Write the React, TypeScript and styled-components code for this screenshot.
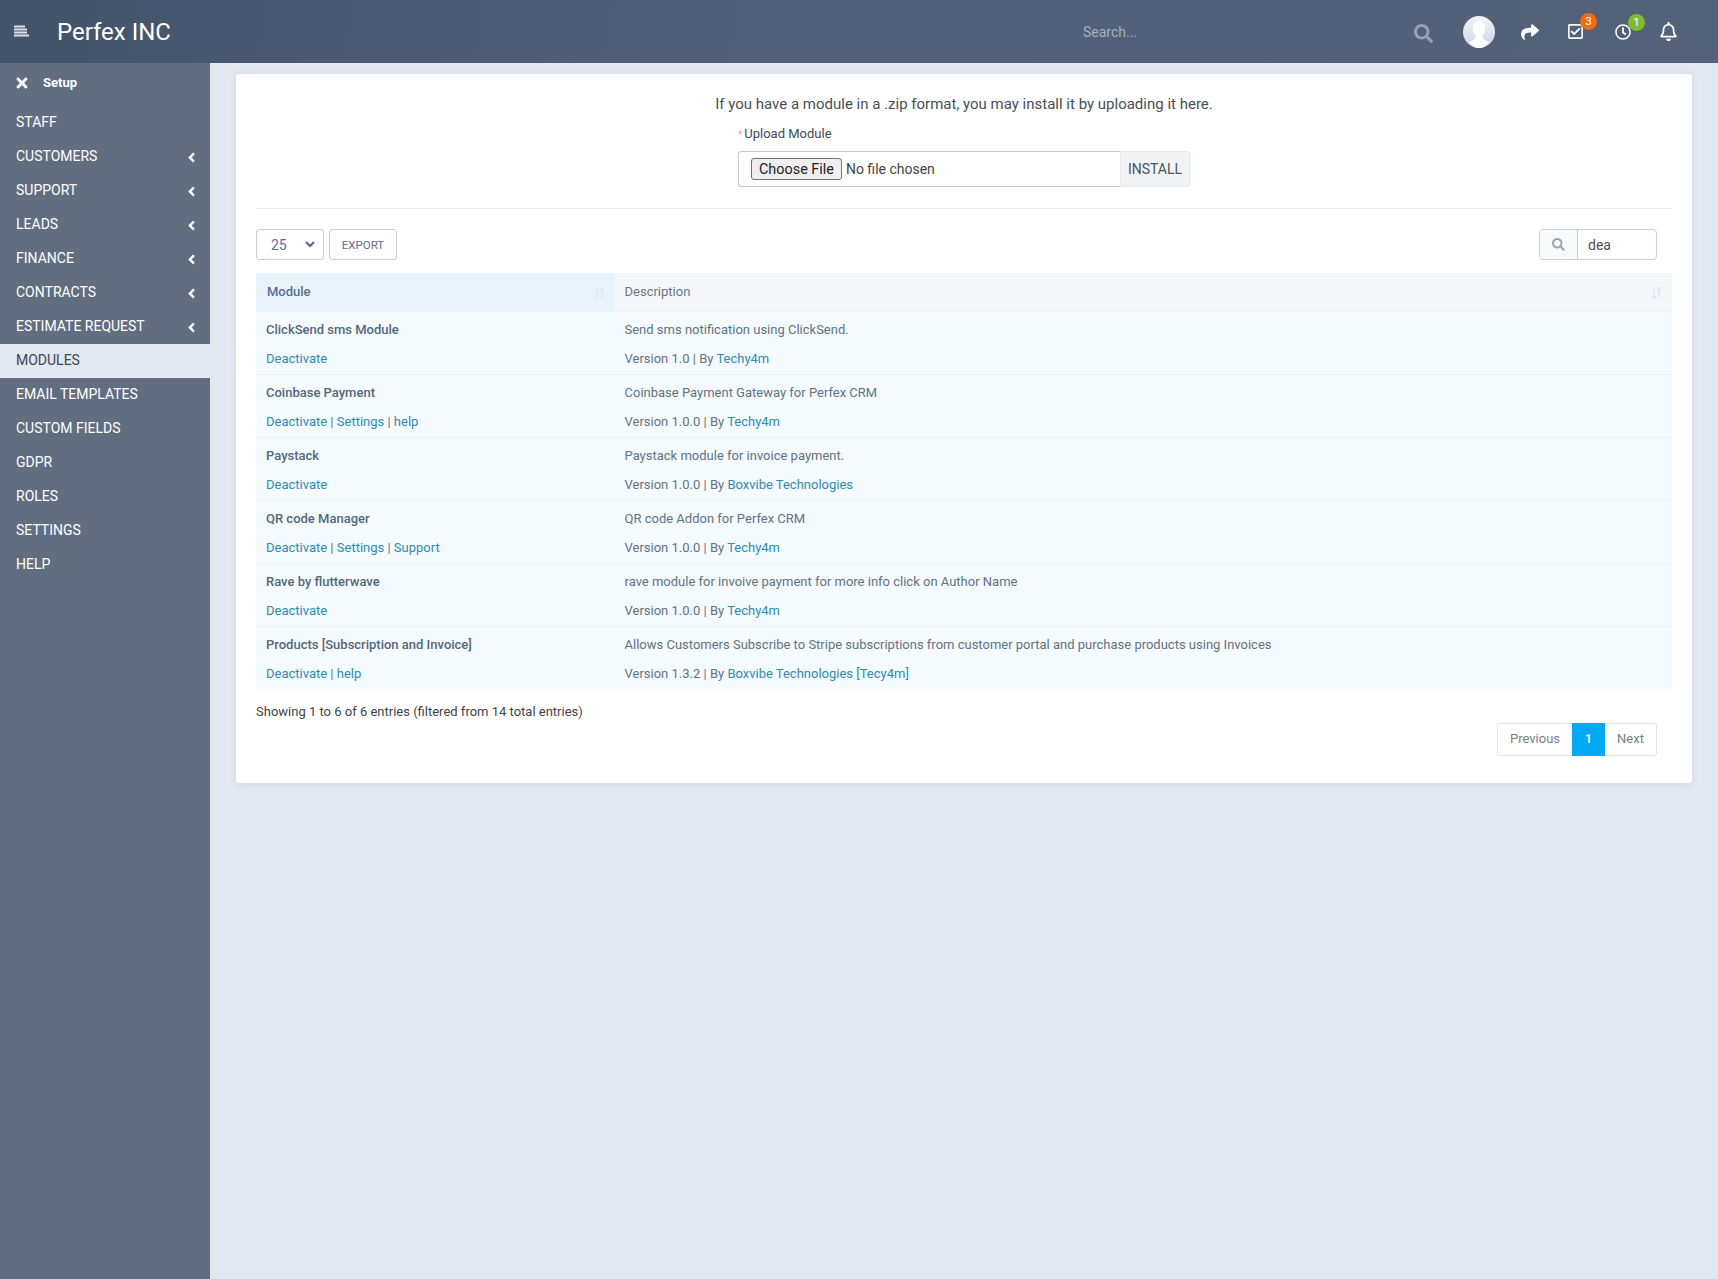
import React from "react";
import styled, { createGlobalStyle } from "styled-components";
import { FaTimes, FaSearch, FaShare, FaRegCheckSquare, FaRegClock, FaRegBell, FaAngleLeft } from "react-icons/fa";

const Global = createGlobalStyle`
  html, body { margin: 0; padding: 0; background: #e2e7f0; }
  body { font-family: Roboto, "Liberation Sans", sans-serif; font-size: 13px; color: #5f7481; }
  * { box-sizing: border-box; }
`;

const Page = styled.div`min-height: 1279px; display: flex; flex-direction: column;`;

const Header = styled.header`
  height: 63px; display: flex; align-items: center; flex: none;
  background: linear-gradient(100deg, #43536a 0%, #4f5f78 40%, #536279 100%);
  color: #fff;
`;
const Burger = styled.button`
  border: 0; background: none; padding: 0; margin-left: 14px; width: 15px; height: 13px; display: flex; color: #dde1e7;
`;
const Brand = styled.div`font-size: 24px; margin-left: 28px; color: #fff; line-height: 28px;`;
const HeaderSearch = styled.div`
  margin-left: 912px; width: 350px; color: #a5afbe; font-size: 14px;
  display: flex; justify-content: space-between; align-items: center;
`;
const SearchGlyph = styled.span`display: flex; color: #97a1af; font-size: 19px; margin-top: 3px;`;
const Avatar = styled.span`display: flex; margin-left: 30px;`;
const HeaderIcons = styled.div`display: flex; align-items: center;`;
const IconLink = styled.span<{ $ml: number; $size: number }>`
  position: relative; display: flex; margin-left: ${p => p.$ml}px; font-size: ${p => p.$size}px; color: #fff;
`;
const Badge = styled.span<{ $color: string; $left: number }>`
  position: absolute; left: ${p => p.$left}px; top: -10px; width: 17px; height: 17px; border-radius: 50%;
  background: ${p => p.$color}; color: #fff; font-size: 11.5px; line-height: 17px; text-align: center;
`;

const Body = styled.div`display: flex; flex: 1;`;
const Sidebar = styled.aside`width: 210px; flex: none; background: #616e80;`;
const SetupRow = styled.div`
  height: 39px; margin-bottom: 4px; display: flex; align-items: center; padding: 0 0 0 14px;
  color: #fff; font-weight: 700; font-size: 13px; gap: 13px;
`;
const NavItem = styled.div<{ $active?: boolean }>`
  height: 34px; display: flex; align-items: center; justify-content: space-between; padding: 0 16px 2px;
  font-size: 14px; text-transform: uppercase;
  color: ${p => (p.$active ? "#3f4652" : "#fff")};
  background: ${p => (p.$active ? "#e2e7f0" : "transparent")};
`;
const Chevron = styled.span`display: flex; font-size: 15px; color: #fff; margin-right: -5px; margin-top: 2px;`;

const Main = styled.main`flex: 1; padding: 11px 26px 0;`;
const Panel = styled.section`
  background: #fff; border-radius: 3px; padding: 0 20px; height: 709px;
  box-shadow: 0 1px 6px rgba(160,170,185,.25);
`;
const Upload = styled.div`
  height: 135px; border-bottom: 1px solid #e9ecf0; display: flex; flex-direction: column; align-items: center;
`;
const UploadIntro = styled.div`font-size: 15px; color: #4a4f55; margin-top: 21px; line-height: 18px;`;
const UploadForm = styled.div`width: 452px; margin-top: 13px;`;
const UploadLabel = styled.label`display: block; font-size: 13px; color: #444b52; line-height: 16px;`;
const Star = styled.span`color: #e8998d; font-size: 10px; margin-right: 2px;`;
const InputGroup = styled.div`display: flex; height: 36px; margin-top: 8px;`;
const FileBox = styled.div`
  flex: 1; border: 1px solid #c6c9cd; border-right: 0; border-radius: 3px 0 0 3px;
  display: flex; align-items: center; padding-left: 12px;
`;
const FileInput = styled.input`
  font-family: Roboto, "Liberation Sans", sans-serif; font-size: 14px; color: #444; width: 300px;
  &::file-selector-button { font: inherit; font-size: 14.4px; color: #222; height: 22px; padding: 0 7px; margin-right: 4px; border: 1px solid #767676; border-radius: 3px; background: #efefef; }
`;
const InstallAddon = styled.div`
  width: 70px; background: #f1f4f7; border: 1px solid #e6e9ed; border-radius: 0 3px 3px 0;
  font-size: 14px; color: #4a5360; display: flex; align-items: center; justify-content: center;
`;

const Toolbar = styled.div`display: flex; align-items: center; height: 31px; margin-top: 20px; padding-right: 15px;`;
const LengthSelect = styled.div`
  width: 68px; height: 31px; border: 1px solid #c9ced6; border-radius: 3px;
  display: flex; align-items: center; justify-content: space-between; padding: 0 8px 0 14px;
  font-size: 14px; color: #5d6f99; 
`;
const ExportButton = styled.button`
  margin-left: 5px; width: 68px; height: 31px; border: 1px solid #c9ced6; border-radius: 3px; background: #fff;
  font-family: inherit; font-size: 11.5px; color: #5f6f8c; padding: 0;
`;
const FilterGroup = styled.div`
  margin-left: auto; width: 118px; height: 31px; border: 1px solid #c9ced6; border-radius: 4px;
  display: flex; overflow: hidden;
`;
const FilterIcon = styled.span`
  width: 38px; flex: none; background: #f8fafc; border-right: 1px solid #c9ced6; display: flex;
  align-items: center; justify-content: center; color: #9aa5b4; font-size: 13px;
`;
const FilterValue = styled.span`padding-left: 10px; font-size: 14px; color: #4a4f55; align-self: center;`;

const Table = styled.table`
  width: 100%; margin-top: 13px; border-collapse: collapse; table-layout: fixed;
`;
const Th = styled.th<{ $sorted?: boolean }>`
  height: 38px; padding: 0 11px 0 ${p => (p.$sorted ? 11 : 10)}px; text-align: left; position: relative;
  font-size: 13px; font-weight: ${p => (p.$sorted ? 500 : 400)};
  color: ${p => (p.$sorted ? "#5a6e96" : "#66778a")};
  background: ${p => (p.$sorted ? "#e9f3fc" : "#f5f7fa")};
  border-bottom: 1px solid #eef2f6;
`;
const SortIcon = styled.span`
  position: absolute; right: 10px; top: 14px; display: flex; color: #e3e9ef;
`;
const Row = styled.tr`border-bottom: 1px solid #edf2f7; &:last-child { border-bottom: 0; }`;
const Td = styled.td`
  height: 63px; padding: 0 10px; background: #f5faff; vertical-align: top;
`;
const LineTop = styled.div<{ $strong?: boolean }>`
  margin-top: 10px; line-height: 16px; font-weight: ${p => (p.$strong ? 500 : 400)};
  color: ${p => (p.$strong ? "#52697a" : "#5f7481")};
`;
const LineBottom = styled.div`margin-top: 13px; line-height: 16px; color: #5f7481;`;
const TableLink = styled.a`color: #2e8cb0; text-decoration: none;`;

const Footer = styled.div`
  display: flex; justify-content: space-between; align-items: flex-start; padding-right: 15px;
`;
const Info = styled.div`margin-top: 15px; line-height: 16px; color: #3f4448;`;
const Pager = styled.div`
  display: flex; margin-top: 34px; height: 33px; border: 1px solid #e0e3e7; border-radius: 3px;
`;
const PageButton = styled.span<{ $active?: boolean; $w: number }>`
  width: ${p => p.$w}px; margin: ${p => (p.$active ? "-1px 0" : "0")}; display: flex; align-items: center; justify-content: center;
  font-size: 13px; font-weight: ${p => (p.$active ? 500 : 400)}; padding-bottom: 2px;
  color: ${p => (p.$active ? "#fff" : "#7b7f85")};
  background: ${p => (p.$active ? "#03a9f4" : "#fff")};
`;

const nav: [string, boolean][] = [
  ["Staff", false], ["Customers", true], ["Support", true], ["Leads", true], ["Finance", true], ["Contracts", true],
  ["Estimate Request", true], ["Modules", false], ["Email Templates", false], ["Custom Fields", false], ["GDPR", false],
  ["Roles", false], ["Settings", false], ["Help", false],
];

const rows: { name: string; actions: string[]; desc: string; version: string; author: string }[] = [
  { name: "ClickSend sms Module", actions: ["Deactivate"], desc: "Send sms notification using ClickSend.", version: "1.0", author: "Techy4m" },
  { name: "Coinbase Payment", actions: ["Deactivate", "Settings", "help"], desc: "Coinbase Payment Gateway for Perfex CRM", version: "1.0.0", author: "Techy4m" },
  { name: "Paystack", actions: ["Deactivate"], desc: "Paystack module for invoice payment.", version: "1.0.0", author: "Boxvibe Technologies" },
  { name: "QR code Manager", actions: ["Deactivate", "Settings", "Support"], desc: "QR code Addon for Perfex CRM", version: "1.0.0", author: "Techy4m" },
  { name: "Rave by flutterwave", actions: ["Deactivate"], desc: "rave module for invoive payment for more info click on Author Name", version: "1.0.0", author: "Techy4m" },
  { name: "Products [Subscription and Invoice]", actions: ["Deactivate", "help"], desc: "Allows Customers Subscribe to Stripe subscriptions from customer portal and purchase products using Invoices", version: "1.3.2", author: "Boxvibe Technologies [Tecy4m]" },
];

const SortArrows = () => (
  <svg width="11" height="12" viewBox="0 0 11 12" fill="none" stroke="currentColor" strokeWidth="1.6">
    <path d="M3 1v10M1 9l2 2 2-2M8 11V1M6 3l2-2 2 2" />
  </svg>
);

export default function App() {
  return (
    <Page>
      <Global />
      <Header>
        <Burger aria-label="menu">
          <svg width="15" height="13" viewBox="0 0 15 13" fill="none" stroke="currentColor" strokeWidth="1.8">
            <path d="M0 1.5h11M0 4.500h13M0 7.500h13M0 10.500h15" />
          </svg>
        </Burger>
        <Brand>Perfex INC</Brand>
        <HeaderSearch>
          <span>Search...</span>
          <SearchGlyph><FaSearch /></SearchGlyph>
        </HeaderSearch>
        <Avatar>
          <svg width="32" height="32" viewBox="0 0 32 32">
            <defs>
              <linearGradient id="avatarBg" x1="0" y1="0" x2="0" y2="1">
                <stop offset="0" stopColor="#f4f5f9" />
                <stop offset="1" stopColor="#ccd3e4" />
              </linearGradient>
            </defs>
            <circle cx="16" cy="16" r="16" fill="url(#avatarBg)" />
            <path d="M16 5C12 5 10 8 10 12C10 15 11 18 12.500 20C13 22 11 24 6 26C9 30 12 32 16 32C20 32 23 30 26 26C21 24 19 22 19.500 20C21 18 22 15 22 12C22 8 20 5 16 5Z" fill="#fff" />
          </svg>
        </Avatar>
        <HeaderIcons>
          <IconLink $ml={26} $size={18}><FaShare /></IconLink>
          <IconLink $ml={28} $size={17}><FaRegCheckSquare /><Badge $color="#f06c12" $left={13}>3</Badge></IconLink>
          <IconLink $ml={31} $size={16}><FaRegClock /><Badge $color="#7fbc33" $left={13}>1</Badge></IconLink>
          <IconLink $ml={28} $size={19}><FaRegBell /></IconLink>
        </HeaderIcons>
      </Header>
      <Body>
        <Sidebar>
          <SetupRow><FaTimes size={16} />Setup</SetupRow>
          {nav.map(([label, more]) => (
            <NavItem key={label} $active={label === "Modules"}>
              {label}
              {more && <Chevron><FaAngleLeft /></Chevron>}
            </NavItem>
          ))}
        </Sidebar>
        <Main>
          <Panel>
            <Upload>
              <UploadIntro>If you have a module in a .zip format, you may install it by uploading it here.</UploadIntro>
              <UploadForm>
                <UploadLabel><Star>*</Star>Upload Module</UploadLabel>
                <InputGroup>
                  <FileBox><FileInput type="file" /></FileBox>
                  <InstallAddon>INSTALL</InstallAddon>
                </InputGroup>
              </UploadForm>
            </Upload>
            <Toolbar>
              <LengthSelect>25
                <svg width="10" height="7" viewBox="0 0 10 7" fill="none" stroke="#4f6390" strokeWidth="2"><path d="M1 1l4 4 4-4" /></svg>
              </LengthSelect>
              <ExportButton>EXPORT</ExportButton>
              <FilterGroup>
                <FilterIcon><FaSearch /></FilterIcon>
                <FilterValue>dea</FilterValue>
              </FilterGroup>
            </Toolbar>
            <Table>
              <colgroup><col style={{ width: 358.5 }} /><col /></colgroup>
              <thead>
                <tr>
                  <Th $sorted>Module<SortIcon><SortArrows /></SortIcon></Th>
                  <Th>Description<SortIcon><SortArrows /></SortIcon></Th>
                </tr>
              </thead>
              <tbody>
                {rows.map(r => (
                  <Row key={r.name}>
                    <Td>
                      <LineTop $strong>{r.name}</LineTop>
                      <LineBottom>
                        {r.actions.map((a, i) => (
                          <React.Fragment key={a}>
                            {i > 0 && " | "}
                            <TableLink>{a}</TableLink>
                          </React.Fragment>
                        ))}
                      </LineBottom>
                    </Td>
                    <Td>
                      <LineTop>{r.desc}</LineTop>
                      <LineBottom>Version {r.version} | By <TableLink>{r.author}</TableLink></LineBottom>
                    </Td>
                  </Row>
                ))}
              </tbody>
            </Table>
            <Footer>
              <Info>Showing 1 to 6 of 6 entries (filtered from 14 total entries)</Info>
              <Pager>
                <PageButton $w={74}>Previous</PageButton>
                <PageButton $w={33} $active>1</PageButton>
                <PageButton $w={51}>Next</PageButton>
              </Pager>
            </Footer>
          </Panel>
        </Main>
      </Body>
    </Page>
  );
}
